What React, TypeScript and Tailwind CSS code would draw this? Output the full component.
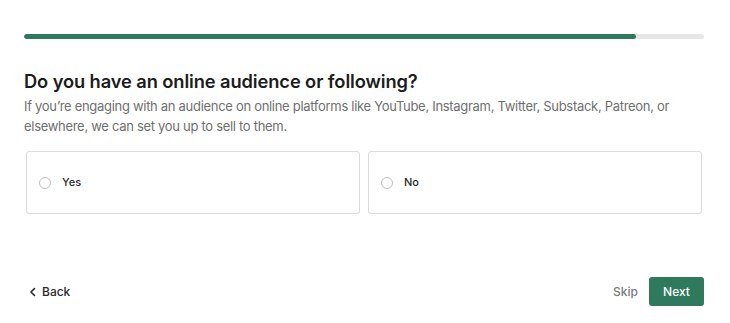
import React, { useState } from 'react';

const options = ['Yes', 'No'];

export default function App() {
  const [choice, setChoice] = useState<string | null>(null);

  return (
    <div className="w-[730px] h-[323px] bg-white font-['Inter',sans-serif] text-[#1f1f1f] px-6 pt-[34px] flex flex-col">
      {/* Progress */}
      <div className="h-[5px] mr-[2px] rounded-full bg-[#e6e6e6] overflow-hidden">
        <div className="h-full w-[90%] rounded-full bg-[#2f7a5c]" />
      </div>

      <h1 className="mt-[30px] text-[18.3px] leading-[24px] font-semibold tracking-[-0.1px] text-[#1c1c1c]">
        Do you have an online audience or following?
      </h1>
      <p className="mt-[3px] text-[13px] leading-[20px] tracking-[-0.3px] text-[#6f6f6f]">
        If you’re engaging with an audience on online platforms like YouTube, Instagram, Twitter, Substack, Patreon, or
        elsewhere, we can set you up to sell to them.
      </p>

      <div className="mt-[15px] ml-[2px] mr-[4px] grid grid-cols-2 gap-2">
        {options.map((opt) => (
          <button
            key={opt}
            onClick={() => setChoice(opt)}
            className="h-[63px] rounded-[3px] border border-[#dcdcdc] flex items-center gap-[11px] pl-[12px] text-left"
          >
            <span
              className={
                choice === opt
                  ? 'w-[12px] h-[12px] rounded-full border-[4px] border-[#2f7a5c]'
                  : 'w-[12px] h-[12px] rounded-full border border-[#bdbdbd]'
              }
            />
            <span className="text-[11px] font-medium text-[#2a2a2a]">{opt}</span>
          </button>
        ))}
      </div>

      <div className="mt-auto mb-[17px] mr-[2px] flex items-center justify-between">
        <button className="flex items-center gap-[5px] pl-[5px] text-[12px] font-medium text-[#2a2a2a]">
          <svg width="8" height="10" viewBox="0 0 8 10" fill="none">
            <path d="M5.5 1.5L2 5l3.5 3.5" stroke="#2a2a2a" strokeWidth="1.6" strokeLinecap="round" strokeLinejoin="round" />
          </svg>
          Back
        </button>
        <div className="flex items-center gap-[11px]">
          <button className="text-[12px] font-medium text-[#7a7a7a]">Skip</button>
          <button className="h-[29px] w-[55px] rounded-[3px] bg-[#2f7a5c] text-[12px] font-medium text-white">Next</button>
        </div>
      </div>
    </div>
  );
}
